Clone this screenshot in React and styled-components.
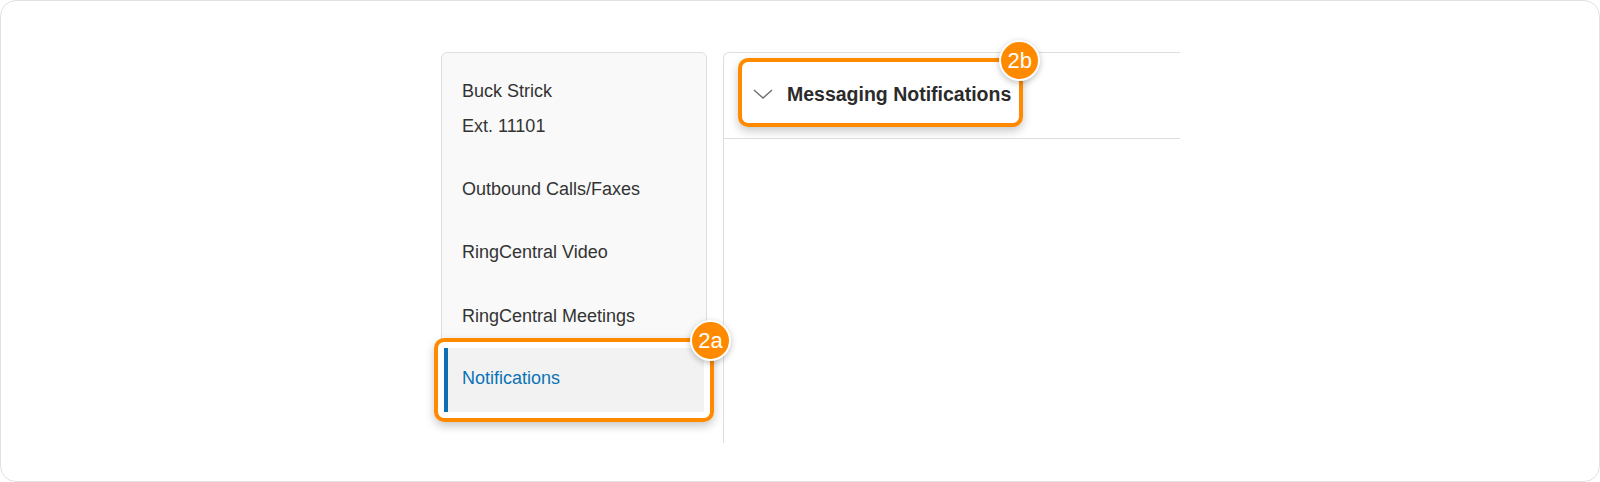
import React from 'react'
import styled, { createGlobalStyle } from 'styled-components';

const GlobalStyle = createGlobalStyle`
  html, body {
    margin: 0;
    padding: 0;
    background: #ffffff;
  }
  body {
    font-family: "Liberation Sans", Arial, Helvetica, sans-serif;
  }
`;

const Frame = styled.div`
  box-sizing: border-box;
  width: 1600px;
  height: 482px;
  border: 1px solid #e2e2e2;
  border-radius: 16px;
  background: #ffffff;
  overflow: hidden;
  display: flex;
  align-items: flex-start;
  gap: 16px;
  padding: 51px 0 0 440px;
`;

const Sidebar = styled.div`
  box-sizing: border-box;
  width: 266px;
  background: #f9f9f9;
  border: 1px solid #dedede;
  border-radius: 6px 6px 0 0;
  padding-bottom: 2px;
`;

const Profile = styled.div`
  padding: 26px 20px 18px;
  display: flex;
  flex-direction: column;
  gap: 11px;
`;

const ProfileLine = styled.div`
  font-size: 18px;
  line-height: 24px;
  color: #333333;
`;

const NavItem = styled.div`
  position: relative;
  box-sizing: border-box;
  display: flex;
  align-items: center;
  height: 64px;
  padding-top: ${p => p.$nudge > 0 ? `${p.$nudge * 2}px` : '0'};
  padding-bottom: ${p => p.$nudge < 0 ? `${-p.$nudge * 2}px` : '0'};
  font-size: 18px;
  color: ${p => (p.$active ? '#0c72b6' : '#333333')};
  background: ${p => (p.$active ? '#f2f2f2' : 'transparent')};
  border-left: ${p => (p.$active ? '4px solid #0a6fb3' : 'none')};
  margin: ${p => (p.$active ? '0 2px' : '0')};
  padding-left: ${p => (p.$active ? '14px' : '20px')};
`;

const Content = styled.div`
  box-sizing: border-box;
  width: 457px;
  height: 391px;
  border-top: 1px solid #dedede;
  border-left: 1px solid #dedede;
  border-top-left-radius: 6px;
  background: #ffffff;
`;

const SectionHeader = styled.div`
  height: 85px;
  border-bottom: 1px solid #dedede;
  display: flex;
  align-items: center;
  padding-left: 18px;
`;

const SectionTitle = styled.div`
  position: relative;
  box-sizing: border-box;
  display: inline-flex;
  align-items: center;
  gap: 14px;
  height: 61px;
  margin-top: -6px;
  padding: 3px 8px 0 11px;
  font-size: 19.5px;
  font-weight: 700;
  color: #2b2b2b;
`;

const Chevron = styled.svg`
  width: 20px;
  height: 10px;
  flex: none;
`;

const Callout = styled.div`
  position: absolute;
  inset: ${p => p.$inset};
  border: 4px solid #ff8a00;
  border-radius: 10px;
  box-shadow: inset 0 0 0 ${p => p.$ring} #ffffff, 0 4px 10px rgba(0, 0, 0, 0.22);
  pointer-events: none;
`;

const Badge = styled.div`
  position: absolute;
  top: -22px;
  right: -21px;
  box-sizing: border-box;
  width: 41px;
  height: 41px;
  border-radius: 50%;
  background: #ff8a00;
  border: 2px solid #ffffff;
  box-shadow: 0 2px 6px rgba(0, 0, 0, 0.25);
  color: #ffffff;
  font-size: 22px;
  font-weight: 400;
  line-height: 37px;
  text-align: center;
`;

const App = () => {
  return (
    <>
      <GlobalStyle />
      <Frame>
        <Sidebar>
          <Profile>
            <ProfileLine>Buck Strick</ProfileLine>
            <ProfileLine>Ext. 11101</ProfileLine>
          </Profile>
          <NavItem $nudge={1}>Outbound Calls/Faxes</NavItem>
          <NavItem $nudge={0}>RingCentral Video</NavItem>
          <NavItem $nudge={0}>RingCentral Meetings</NavItem>
          <NavItem $active $nudge={-1.5}>
            Notifications
            <Callout $inset="-10px -10px -10px -14px" $ring="6px">
              <Badge>2a</Badge>
            </Callout>
          </NavItem>
        </Sidebar>
        <Content>
          <SectionHeader>
            <SectionTitle>
              <Chevron viewBox="0 0 20 10">
                <path d="M1 1 L10 9 L19 1" fill="none" stroke="#707070" strokeWidth="1.4" />
              </Chevron>
              Messaging Notifications
              <Callout $inset="-4px" $ring="0px">
                <Badge>2b</Badge>
              </Callout>
            </SectionTitle>
          </SectionHeader>
        </Content>
      </Frame>
    </>
  )
}

export default App
